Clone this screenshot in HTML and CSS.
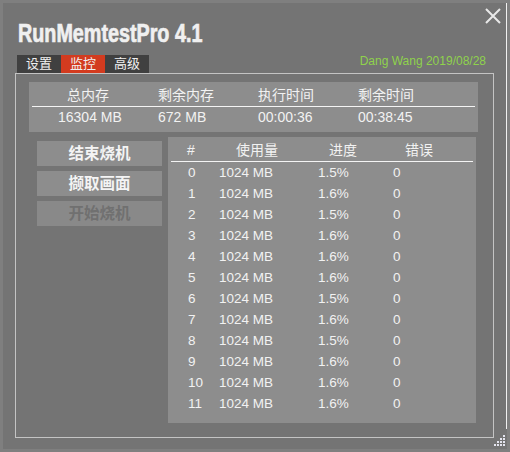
FILE: index.html
```html
<!DOCTYPE html>
<html>
<head>
<meta charset="utf-8">
<link rel="stylesheet" href="styles.css">
</head>
<body>
<div class="window">
  <div class="edge-line"></div>
  <svg class="close" width="16" height="16" viewBox="0 0 16 16"><path d="M1 1 L15 15 M15 1 L1 15" stroke="#e8e8e8" stroke-width="2" fill="none"/></svg>
  <h1 class="title">RunMemtestPro 4.1</h1>
  <div class="tabrow">
    <div class="tabs">
      <span class="tab">设置</span>
      <span class="tab active">监控</span>
      <span class="tab">高级</span>
    </div>
    <span class="author">Dang Wang 2019/08/28</span>
  </div>
  <div class="box">
    <div class="summary">
      <div class="sum-row sum-head">
        <span class="first">总内存</span><span>剩余内存</span><span>执行时间</span><span>剩余时间</span>
      </div>
      <div class="sum-row">
        <span>16304 MB</span><span>672 MB</span><span>00:00:36</span><span>00:38:45</span>
      </div>
    </div>
    <div class="lower">
      <div class="buttons">
        <div class="btn">结束烧机</div>
        <div class="btn">撷取画面</div>
        <div class="btn disabled">开始烧机</div>
      </div>
      <div class="table">
        <div class="trow thead"><span class="h1">#</span><span class="h2">使用量</span><span class="h3">进度</span><span class="h4">错误</span></div>
        <div class="trow"><span>0</span><span>1024 MB</span><span>1.5%</span><span>0</span></div>
        <div class="trow"><span>1</span><span>1024 MB</span><span>1.6%</span><span>0</span></div>
        <div class="trow"><span>2</span><span>1024 MB</span><span>1.5%</span><span>0</span></div>
        <div class="trow"><span>3</span><span>1024 MB</span><span>1.6%</span><span>0</span></div>
        <div class="trow"><span>4</span><span>1024 MB</span><span>1.6%</span><span>0</span></div>
        <div class="trow"><span>5</span><span>1024 MB</span><span>1.6%</span><span>0</span></div>
        <div class="trow"><span>6</span><span>1024 MB</span><span>1.5%</span><span>0</span></div>
        <div class="trow"><span>7</span><span>1024 MB</span><span>1.6%</span><span>0</span></div>
        <div class="trow"><span>8</span><span>1024 MB</span><span>1.5%</span><span>0</span></div>
        <div class="trow"><span>9</span><span>1024 MB</span><span>1.6%</span><span>0</span></div>
        <div class="trow"><span>10</span><span>1024 MB</span><span>1.6%</span><span>0</span></div>
        <div class="trow"><span>11</span><span>1024 MB</span><span>1.6%</span><span>0</span></div>
      </div>
    </div>
  </div>
  <svg class="grip" width="12" height="12" viewBox="0 0 12 12">
    <rect x="9" y="0" width="2" height="2" fill="#e4e4ee"/>
    <rect x="6" y="3" width="2" height="2" fill="#e4e4ee"/><rect x="9" y="3" width="2" height="2" fill="#e4e4ee"/>
    <rect x="3" y="6" width="2" height="2" fill="#e4e4ee"/><rect x="6" y="6" width="2" height="2" fill="#e4e4ee"/><rect x="9" y="6" width="2" height="2" fill="#e4e4ee"/>
    <rect x="0" y="9" width="2" height="2" fill="#e4e4ee"/><rect x="3" y="9" width="2" height="2" fill="#e4e4ee"/><rect x="6" y="9" width="2" height="2" fill="#e4e4ee"/><rect x="9" y="9" width="2" height="2" fill="#e4e4ee"/>
  </svg>
</div>
</body>
</html>
```

FILE: styles.css
```css
html, body {
  margin: 0;
  padding: 0;
  background: #747474;
}
body {
  font-family: "Liberation Sans", "Noto Sans CJK SC", sans-serif;
  color: #f2f2f2;
}
.window {
  position: relative;
  width: 510px;
  height: 452px;
  box-sizing: border-box;
  border: 3px solid #7f7f7f;
  background: #747474;
  padding-top: 18px;
  overflow: hidden;
}
.edge-line {
  position: absolute;
  top: 0;
  right: 0;
  width: 1px;
  height: 426px;
  background: #f0f0f0;
}
.close {
  position: absolute;
  top: 5px;
  right: 6px;
}
.title {
  margin: 0 0 0 15px;
  font-family: "Liberation Sans", sans-serif;
  font-weight: 900;
  font-size: 25px;
  line-height: 25px;
  color: #f0f0f0;
  -webkit-text-stroke: 0.7px #f0f0f0;
  transform: scaleX(0.79);
  transform-origin: left center;
  white-space: nowrap;
}
.tabrow {
  display: flex;
  justify-content: space-between;
  margin: 9px 21px 0 14px;
  height: 18px;
}
.tabs {
  display: flex;
}
.tab {
  width: 44px;
  height: 18px;
  line-height: 18px;
  text-align: center;
  font-size: 13px;
  background: #404040;
  color: #f0f0f0;
}
.tab.active {
  background: #d33b1f;
}
.author {
  font-size: 12px;
  line-height: 14px;
  margin-top: -1px;
  color: #8fd24c;
}
.box {
  margin-left: 12px;
  width: 479px;
  box-sizing: border-box;
  border: 1px solid #c4c4c4;
  padding: 8px 15px 14px 13px;
}
.summary {
  background: #8d8d8d;
  height: 50px;
}
.sum-row {
  display: grid;
  grid-template-columns: 100px 100px 100px 100px;
  padding-left: 26px;
  margin: 0 3px;
  font-size: 14px;
  line-height: 20px;
}
.sum-head {
  padding-top: 3px;
  line-height: 21px;
  border-bottom: 1px solid #f4f4f4;
}
.sum-head .first {
  padding-left: 9px;
}
.lower {
  display: flex;
  margin-top: 5px;
}
.buttons {
  display: flex;
  flex-direction: column;
  gap: 5px;
  padding-top: 4px;
  margin-left: 8px;
  width: 125px;
}
.btn {
  height: 25px;
  line-height: 25px;
  background: #8d8d8d;
  text-align: center;
  font-weight: bold;
  font-size: 15.5px;
  color: #f4f4f4;
}
.btn.disabled {
  color: #707070;
  background: #898989;
}
.table {
  margin-left: 6px;
  width: 308px;
  height: 286px;
  box-sizing: border-box;
  background: #8d8d8d;
  padding-bottom: 9px;
}
.trow {
  display: grid;
  grid-template-columns: 31px 99px 75px 1fr;
  margin: 0 3px;
  padding-left: 17px;
  font-size: 13.5px;
  line-height: 21px;
  height: 21px;
  white-space: nowrap;
}
.thead {
  padding-top: 3px;
  height: 21px;
  border-bottom: 1px solid #f4f4f4;
  font-size: 14px;
}
.thead .h1 { margin-left: -1px; }
.thead .h2 { padding-left: 17px; }
.thead .h3 { padding-left: 11px; }
.thead .h4 { padding-left: 12px; }
.grip {
  position: absolute;
  right: 1px;
  bottom: 2px;
}
```
